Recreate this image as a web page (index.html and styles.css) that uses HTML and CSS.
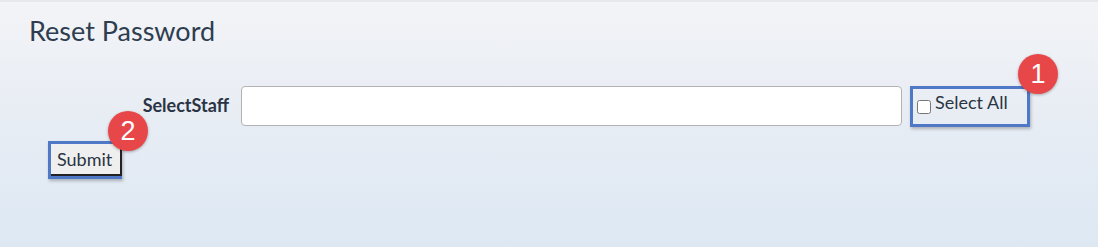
FILE: index.html
```html
<!DOCTYPE html>
<html>
<head>
<meta charset="utf-8">
<link rel="stylesheet" href="styles.css">
</head>
<body>
<div class="page">
  <h1 class="title">Reset Password</h1>
  <div class="form-row">
    <label class="lbl" for="staff">SelectStaff</label>
    <input class="field" id="staff" type="text">
    <label class="select-all annot">
      <input type="checkbox" class="chk">
      <span class="sa-text">Select All</span>
      <span class="badge badge-1">1</span>
    </label>
  </div>
  <div class="submit-row">
    <span class="annot submit-wrap">
      <button class="submit" type="button">Submit</button>
      <span class="badge badge-2">2</span>
    </span>
  </div>
</div>
</body>
</html>
```
FILE: styles.css
```css
html, body {
  margin: 0;
  padding: 0;
}
body {
  width: 1098px;
  height: 247px;
  overflow: hidden;
  font-family: Lato, "Liberation Sans", sans-serif;
  color: #2a3a4d;
  background: linear-gradient(to bottom, #f3f4f7 0%, #e8edf4 45%, #dde8f3 100%);
  border-top: 2px solid #e6e8ec;
  box-sizing: border-box;
}
.page {
  padding: 0 0 0 29px;
}
.title {
  margin: 0;
  padding-top: 13px;
  font-size: 27px;
  font-weight: 400;
  line-height: 32px;
  color: #2e3d50;
}
.form-row {
  display: flex;
  align-items: center;
  margin-top: 37px;
}
.lbl {
  width: 200px;
  text-align: right;
  font-weight: 700;
  font-size: 18px;
  color: #2a3444;
  margin-right: 12px;
  margin-top: -2px;
}
.field {
  width: 661px;
  height: 40px;
  box-sizing: border-box;
  border: 1px solid #b3b3b3;
  border-radius: 4px;
  background: #fff;
  margin: 0;
}
.annot {
  position: relative;
  border: 3px solid #4f78c6;
  box-shadow: 1px 2px 3px rgba(0, 0, 0, 0.25);
  box-sizing: border-box;
}
.select-all {
  display: flex;
  align-items: flex-start;
  margin-left: 8px;
  width: 120px;
  height: 41px;
  padding: 2px 0 0 4px;
  margin-top: 2px;
  font-size: 18px;
  line-height: 22px;
  color: #2a3444;
}
.chk {
  width: 14px;
  height: 14px;
  margin: 9px 4px 0 0;
}
.badge {
  position: absolute;
  width: 40px;
  height: 40px;
  border-radius: 50%;
  background: #e8474a;
  color: #fff;
  font-family: "Liberation Sans", Arial, sans-serif;
  font-size: 27px;
  line-height: 40px;
  text-align: center;
  box-shadow: 0 1px 3px rgba(0, 0, 0, 0.3);
}
.badge-1 {
  right: -31px;
  top: -35px;
}
.badge-2 {
  right: -29px;
  top: -33px;
}
.submit-row {
  margin-top: 14px;
  padding-left: 19px;
  display: flex;
}
.submit-wrap {
  display: inline-block;
  width: 74px;
  height: 38px;
}
.submit {
  display: block;
  width: 71px;
  height: 32px;
  margin: 0;
  padding: 0 0 0 6px;
  text-align: left;
  font-family: Lato, "Liberation Sans", sans-serif;
  font-size: 18px;
  color: #2a3444;
  background: #efefef;
  border: none;
  border-right: 2px solid #222;
  border-bottom: 2px solid #222;
}
```
